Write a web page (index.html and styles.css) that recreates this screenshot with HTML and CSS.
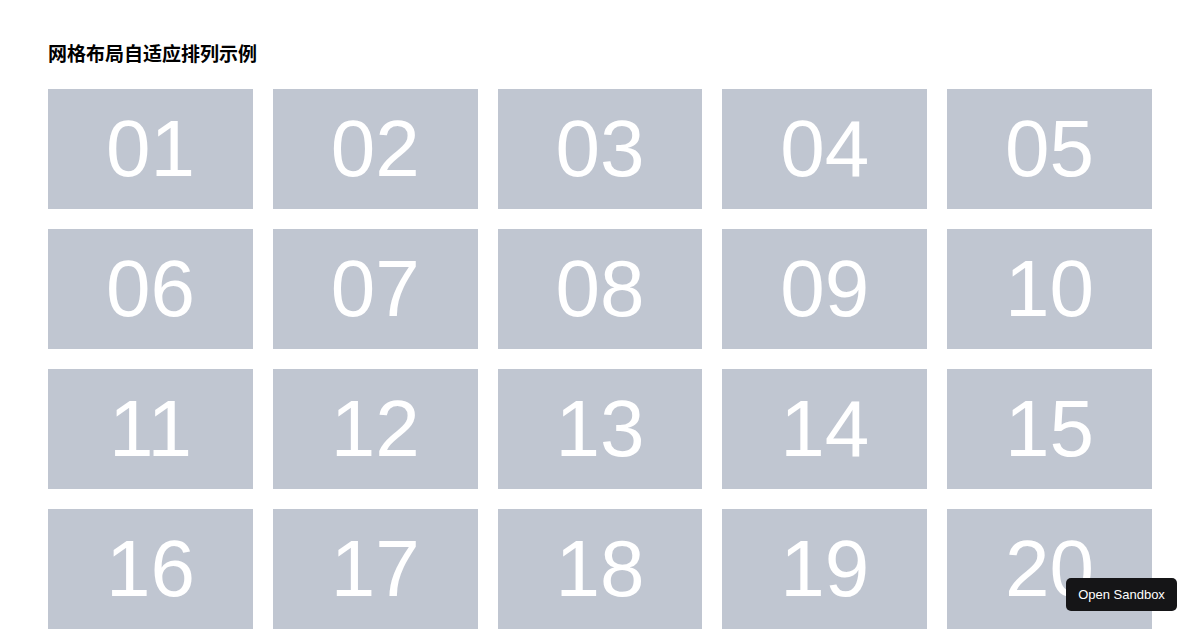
FILE: index.html
```html
<!DOCTYPE html>
<html lang="zh">
<head>
<meta charset="utf-8">
<title>网格布局</title>
<link rel="stylesheet" href="styles.css">
</head>
<body>
<main class="page">
  <h2 class="title">网格布局自适应排列示例</h2>
  <div class="grid">
    <div class="cell">01</div><div class="cell">02</div><div class="cell">03</div><div class="cell">04</div><div class="cell">05</div>
    <div class="cell">06</div><div class="cell">07</div><div class="cell">08</div><div class="cell">09</div><div class="cell">10</div>
    <div class="cell">11</div><div class="cell">12</div><div class="cell">13</div><div class="cell">14</div><div class="cell">15</div>
    <div class="cell">16</div><div class="cell">17</div><div class="cell">18</div><div class="cell">19</div><div class="cell">20</div>
  </div>
</main>
<a class="sandbox-btn" href="#">Open Sandbox</a>
</body>
</html>
```
FILE: styles.css
```css
html, body {
  margin: 0;
  padding: 0;
  background: #ffffff;
}
body {
  font-family: "Liberation Sans", Arial, "Noto Sans CJK SC", sans-serif;
  color: #000;
}
.page {
  padding: 40px 48px 40px;
}
.title {
  margin: 0 0 20px;
  font-family: "Liberation Sans", "Noto Sans CJK SC", sans-serif;
  font-size: 19px;
  line-height: 29px;
  font-weight: 700;
}
.grid {
  display: grid;
  grid-template-columns: repeat(5, 1fr);
  grid-auto-rows: 120px;
  gap: 20px;
}
.cell {
  background: #c0c6d1;
  color: #ffffff;
  display: flex;
  align-items: center;
  justify-content: center;
  font-size: 80px;
  line-height: 1;
  font-weight: 400;
}
.sandbox-btn {
  position: fixed;
  right: 23px;
  bottom: 19px;
  width: 111px;
  height: 33px;
  box-sizing: border-box;
  display: flex;
  align-items: center;
  justify-content: center;
  background: #151517;
  color: #ffffff;
  border-radius: 5px;
  font-family: "Liberation Sans", Arial, sans-serif;
  font-size: 13px;
  text-decoration: none;
}
```
